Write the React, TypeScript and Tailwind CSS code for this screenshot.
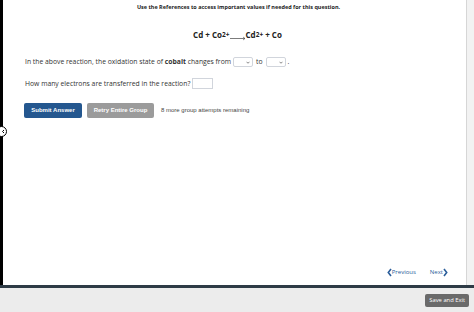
import React from 'react';

function Select() {
  return (
    <span className="inline-flex items-center justify-end w-[20px] h-[10px] border border-gray-300 rounded-[2px] bg-white align-middle pr-[2px]">
      <svg width="4" height="3" viewBox="0 0 8 5">
        <path d="M1 1l3 3 3-3" stroke="#555" strokeWidth="1.4" fill="none" />
      </svg>
    </span>
  );
}

export default function App() {
  return (
    <div className="w-[474px] h-[312px] overflow-hidden bg-white flex flex-col" style={{ fontFamily: '"Open Sans", sans-serif' }}>
      <div className="flex flex-1 relative">
        {/* left bar */}
        <div className="w-[3px] bg-black" />

        {/* collapse handle */}
        <div className="absolute left-[-4px] top-[126px] w-[11px] h-[11px] rounded-full border-[1.5px] border-black bg-white flex items-center justify-center">
          <svg width="5" height="5" viewBox="0 0 10 10" className="ml-[3px]">
            <path d="M6 2L3 5l3 3" stroke="#000" strokeWidth="2" fill="none" />
          </svg>
        </div>

        {/* main */}
        <div className="flex-1 flex flex-col">
          <p className="text-center text-[5.5px] font-bold text-[#222] mt-[3px] ml-[8px]">
            Use the References to access important values if needed for this question.
          </p>

          <div className="flex justify-center mt-[18px] ml-[6px] text-[8px] font-bold text-[#222] items-center">
            <span>Cd + Co<sup className="text-[6.5px] relative top-[-1px]">2+</sup></span>
            <svg width="16" height="6" viewBox="0 0 16 6" className="mt-[5px]">
              <path d="M0 3.5h15" stroke="#444" strokeWidth="0.7" />
              <path d="M13 2l2 1.5-2 1.5" stroke="#444" strokeWidth="0.6" fill="none" />
            </svg>
            <span>Cd<sup className="text-[6.5px] relative top-[-1px]">2+</sup> + Co</span>
          </div>

          <div className="mt-[16px] ml-[22px] text-[6.8px] text-[#333] flex items-center gap-[2px]">
            <span>In the above reaction, the oxidation state of <b>cobalt</b> changes from</span>
            <Select />
            <span className="mx-[1px]">to</span>
            <Select />
            <span>.</span>
          </div>

          <div className="mt-[11px] ml-[22px] text-[6.8px] text-[#333] flex items-center gap-[2px]">
            <span>How many electrons are transferred in the reaction?</span>
            <span className="inline-block w-[21px] h-[11px] border border-gray-300 bg-white" />
          </div>

          <div className="mt-[14px] ml-[21px] flex items-center" style={{ fontFamily: '"Liberation Sans", Arial, sans-serif' }}>
            <button className="w-[58px] h-[15px] rounded-[2px] bg-[#24578f] text-white text-[6px] font-bold">
              Submit Answer
            </button>
            <button className="ml-[5px] w-[67px] h-[15px] rounded-[2px] bg-[#9b9b9b] text-white text-[6px] font-bold">
              Retry Entire Group
            </button>
            <span className="ml-[7px] text-[6px] text-[#444]">8 more group attempts remaining</span>
          </div>

          <div className="flex-1" />

          <div className="flex justify-end items-center gap-[14px] mr-[18px] mb-[8px] text-[6px] text-[#2a5d9a]">
            <span className="flex items-center">
              <svg width="5" height="9" viewBox="0 0 5 9"><path d="M4 1L1.3 4.5 4 8" stroke="#2a5d9a" strokeWidth="1.6" fill="none" /></svg>
              Previous
            </span>
            <span className="flex items-center">
              Next
              <svg width="5" height="9" viewBox="0 0 5 9"><path d="M1 1l2.7 3.5L1 8" stroke="#2a5d9a" strokeWidth="1.6" fill="none" /></svg>
            </span>
          </div>
        </div>

        {/* right strip */}
        <div className="w-[8px] bg-[#f2f2f2] border-l border-[#d6d6d6]" />
      </div>

      {/* bottom bar */}
      <div className="h-[3px] bg-[#2e3b46]" />
      <div className="h-[24px] bg-[#ececec] flex items-center justify-end pr-[5px]">
        <button className="h-[13px] px-[4px] rounded-[2px] bg-[#6a6a6a] text-white text-[5.8px]">Save and Exit</button>
      </div>
    </div>
  );
}
